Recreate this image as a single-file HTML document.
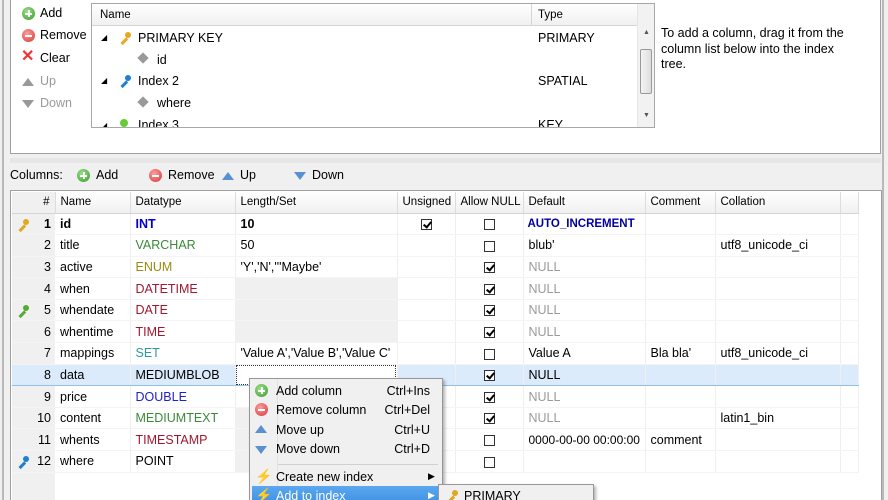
<!DOCTYPE html>
<html style="width:888px;height:500px;overflow:hidden"><head><meta charset="utf-8"><style>
*{box-sizing:border-box;margin:0;padding:0}
body{width:888px;height:500px;overflow:hidden;background:#f0f0f0;font-family:"Liberation Sans",sans-serif;font-size:12px;color:#000;position:relative}
.a{position:absolute}
.ic{position:absolute;width:13px;height:13px;border-radius:50%}
.g{background:radial-gradient(circle at 40% 35%,#9be08a,#3a9a2a)}
.r{background:radial-gradient(circle at 40% 35%,#f8a0a0,#d33)}
.ic:after{content:"";position:absolute;left:3px;top:5.5px;width:7px;height:2px;background:#fff}
.g:before{content:"";position:absolute;left:5.5px;top:3px;width:2px;height:7px;background:#fff}
.up{width:0;height:0;border-left:6px solid transparent;border-right:6px solid transparent;border-bottom:8px solid #5a8fd0;position:absolute}
.dn{width:0;height:0;border-left:6px solid transparent;border-right:6px solid transparent;border-top:8px solid #5a8fd0;position:absolute}
table{border-collapse:collapse;position:absolute;left:12px;top:192px;table-layout:fixed;width:846px;background:#fff}
td,th{height:21.6px;border-right:1px solid #efefef;border-bottom:1px solid #f4f4f4;padding:0 5px;white-space:nowrap;overflow:hidden;font-weight:normal;text-align:left;font-size:12.5px}
th{height:21px;background:linear-gradient(#fff,#f0f0f0);border-right:1px solid #dcdcdc;border-bottom:1px solid #d5d5d5;font-size:11.5px}
td.n{background:#f0f0f0;text-align:right;padding-right:4px;border-right:none}
.gr{background:#f0f0f0}
.cb{display:inline-block;width:11px;height:11px;border:1px solid #333;background:#fff;position:relative;vertical-align:middle}
.ck:after{content:"";position:absolute;left:3px;top:0px;width:3px;height:6px;border:solid #000;border-width:0 2px 2px 0;transform:rotate(40deg)}
.c{text-align:center}
.nl{color:#9a9a9a}
.sel td{background:#dcebfc;border-top:1px solid #8fc1ee;border-bottom:1px solid #8fc1ee}
.mi{position:absolute;left:26px;font-size:12.5px}
.sc{position:absolute;right:12px;font-size:12.5px}
.key{position:relative;display:inline-block;width:12px;height:12px}
.key:before{content:"";position:absolute;right:0;top:0;width:6px;height:6px;border-radius:50%;background:currentColor}
.key:after{content:"";position:absolute;left:0;top:5px;width:8px;height:2.5px;background:currentColor;transform:rotate(-45deg);transform-origin:right center}
</style></head><body>
<div class="a" style="left:2px;top:0;width:2px;height:500px;background:#b9b9b9"></div>
<div class="a" style="left:882px;top:0;width:2px;height:500px;background:#b9b9b9"></div>
<div class="a" style="left:10px;top:-2px;width:871px;height:156px;border:1px solid #a0a0a0;background:#fff"></div>
<div class="ic g" style="left:22px;top:7px"></div><div class="a" style="left:40px;top:6px;font-size:12.5px">Add</div>
<div class="ic r" style="left:22px;top:29px"></div><div class="a" style="left:40px;top:28px;font-size:12.5px">Remove</div>
<div class="a" style="left:21px;top:49px;color:#e33;font-size:16px;font-weight:bold;line-height:16px">✕</div><div class="a" style="left:40px;top:51px;font-size:12.5px">Clear</div>
<div class="up" style="left:22px;top:78px;border-bottom-color:#999"></div><div class="a" style="left:40px;top:74px;color:#999;font-size:12.5px">Up</div>
<div class="dn" style="left:22px;top:100px;border-top-color:#999"></div><div class="a" style="left:40px;top:96px;color:#999;font-size:12.5px">Down</div>
<div class="a" style="left:91px;top:3px;width:564px;height:125px;border:1px solid #a8a8a8;background:#fff;overflow:hidden">
 <div class="a" style="left:0;top:0;width:545px;height:22px;background:linear-gradient(#fff,#f0f0f0);border-bottom:1px solid #d5d5d5"></div>
 <div class="a" style="left:439px;top:0;width:1px;height:22px;background:#d5d5d5"></div>
 <div class="a" style="left:8px;top:5px;font-size:11.5px">Name</div>
 <div class="a" style="left:446px;top:5px;font-size:11.5px">Type</div>
 <div class="a" style="left:9px;top:29px;font-size:8px">◢</div>
 <div class="a" style="left:27px;top:28px;color:#e8a820"><span class="key"></span></div>
 <div class="a" style="left:46px;top:27px;font-size:12.5px">PRIMARY KEY</div>
 <div class="a" style="left:446px;top:27px;font-size:12.5px">PRIMARY</div>
 <div class="a" style="left:47px;top:50px;width:8px;height:8px;background:#999;transform:rotate(45deg)"></div>
 <div class="a" style="left:65px;top:49px;font-size:12.5px">id</div>
 <div class="a" style="left:9px;top:72px;font-size:8px">◢</div>
 <div class="a" style="left:27px;top:71px;color:#1e7fd8"><span class="key"></span></div>
 <div class="a" style="left:46px;top:70px;font-size:12.5px">Index 2</div>
 <div class="a" style="left:446px;top:70px;font-size:12.5px">SPATIAL</div>
 <div class="a" style="left:47px;top:94px;width:8px;height:8px;background:#999;transform:rotate(45deg)"></div>
 <div class="a" style="left:65px;top:92px;font-size:12.5px">where</div>
 <div class="a" style="left:9px;top:117px;font-size:8px">◢</div>
 <div class="a" style="left:28px;top:115px;width:8px;height:8px;border-radius:50%;background:#6c3"></div>
 <div class="a" style="left:46px;top:114px;font-size:12.5px">Index 3</div>
 <div class="a" style="left:446px;top:114px;font-size:12.5px">KEY</div>
 <div class="a" style="left:545px;top:0;width:18px;height:123px;background:#f2f2f2;border-left:1px solid #e5e5e5"></div>
 <div class="a" style="left:548px;top:45px;width:12px;height:45px;border:1px solid #999;border-radius:2px;background:linear-gradient(90deg,#f4f4f4,#ddd)"></div>
 <div class="a" style="left:551px;top:25px;font-size:7px;color:#555">▲</div>
 <div class="a" style="left:551px;top:108px;font-size:7px;color:#555">▼</div>
</div>
<div class="a" style="left:661px;top:26px;width:200px;font-size:12.5px;line-height:15.5px">To add a column, drag it from the column list below into the index tree.</div>
<div class="a" style="left:10px;top:158px;width:871px;height:5px;background:#e6e6e6"></div>
<div class="a" style="left:10px;top:168px;font-size:12.5px">Columns:</div>
<div class="ic g" style="left:77px;top:169px"></div><div class="a" style="left:96px;top:168px;font-size:12.5px">Add</div>
<div class="ic r" style="left:149px;top:169px"></div><div class="a" style="left:168px;top:168px;font-size:12.5px">Remove</div>
<div class="up" style="left:222px;top:172px"></div><div class="a" style="left:240px;top:168px;font-size:12.5px">Up</div>
<div class="dn" style="left:294px;top:172px"></div><div class="a" style="left:312px;top:168px;font-size:12.5px">Down</div>
<div class="a" style="left:10px;top:190px;width:872px;height:312px;border:1px solid #a0a0a0;background:#fff"></div>
<table>
<colgroup><col style="width:43px"><col style="width:75px"><col style="width:105px"><col style="width:162px"><col style="width:58px"><col style="width:68px"><col style="width:122px"><col style="width:70px"><col style="width:125px"><col style="width:18px"></colgroup>
<tr><th style="text-align:right;background:#f0f0f0">#</th><th>Name</th><th>Datatype</th><th>Length/Set</th><th>Unsigned</th><th>Allow NULL</th><th>Default</th><th>Comment</th><th>Collation</th><th></th></tr>
<tr><td class="n"><span style="color:#e0a820;float:left;margin-top:2px" class="key"></span><b>1</b></td><td><b>id</b></td><td style="color:#0000d0"><b>INT</b></td><td><b>10</b></td><td class="c"><span class="cb ck"></span></td><td class="c"><span class="cb"></span></td><td style="color:#0000a0;font-size:11.5px;padding-left:4px"><b>AUTO_INCREMENT</b></td><td></td><td></td><td></td></tr>
<tr><td class="n">2</td><td>title</td><td style="color:#3a8a3a">VARCHAR</td><td>50</td><td></td><td class="c"><span class="cb"></span></td><td>blub'</td><td></td><td>utf8_unicode_ci</td><td></td></tr>
<tr><td class="n">3</td><td>active</td><td style="color:#9a8a10">ENUM</td><td>'Y','N','''Maybe'</td><td></td><td class="c"><span class="cb ck"></span></td><td class="nl">NULL</td><td></td><td></td><td></td></tr>
<tr><td class="n">4</td><td>when</td><td style="color:#a01830">DATETIME</td><td class="gr"></td><td></td><td class="c"><span class="cb ck"></span></td><td class="nl">NULL</td><td></td><td></td><td></td></tr>
<tr><td class="n"><span style="color:#5a3;float:left;margin-top:2px" class="key"></span>5</td><td>whendate</td><td style="color:#a01830">DATE</td><td class="gr"></td><td></td><td class="c"><span class="cb ck"></span></td><td class="nl">NULL</td><td></td><td></td><td></td></tr>
<tr><td class="n">6</td><td>whentime</td><td style="color:#a01830">TIME</td><td class="gr"></td><td></td><td class="c"><span class="cb ck"></span></td><td class="nl">NULL</td><td></td><td></td><td></td></tr>
<tr><td class="n">7</td><td>mappings</td><td style="color:#2a9a9a">SET</td><td>'Value A','Value B','Value C'</td><td></td><td class="c"><span class="cb"></span></td><td>Value A</td><td>Bla bla'</td><td>utf8_unicode_ci</td><td></td></tr>
<tr class="sel"><td class="n" style="background:#dcebfc">8</td><td>data</td><td>MEDIUMBLOB</td><td style="background:#fff;outline:1px dotted #333;outline-offset:-2px"></td><td></td><td class="c"><span class="cb ck"></span></td><td>NULL</td><td></td><td></td><td></td></tr>
<tr><td class="n">9</td><td>price</td><td style="color:#2020d0">DOUBLE</td><td></td><td></td><td class="c"><span class="cb ck"></span></td><td class="nl">NULL</td><td></td><td></td><td></td></tr>
<tr><td class="n">10</td><td>content</td><td style="color:#3a8a3a">MEDIUMTEXT</td><td class="gr"></td><td></td><td class="c"><span class="cb ck"></span></td><td class="nl">NULL</td><td></td><td>latin1_bin</td><td></td></tr>
<tr><td class="n">11</td><td>whents</td><td style="color:#a01830">TIMESTAMP</td><td class="gr"></td><td></td><td class="c"><span class="cb"></span></td><td style="font-size:12px">0000-00-00 00:00:00</td><td>comment</td><td></td><td></td></tr>
<tr><td class="n"><span style="color:#1e7fd8;float:left;margin-top:2px" class="key"></span>12</td><td>where</td><td>POINT</td><td class="gr"></td><td></td><td class="c"><span class="cb"></span></td><td></td><td></td><td></td><td></td></tr>
<tr><td class="n" style="height:40px"></td><td colspan="9" style="border:none"></td></tr>
</table>
<div class="a" style="left:249px;top:378px;width:194px;height:130px;background:#f0f0f0;border:1px solid #979797;box-shadow:2px 2px 3px rgba(0,0,0,.3)">
 <div class="a" style="left:27px;top:0;width:1px;height:130px;background:#e2e2e2"></div>
 <div class="ic g" style="left:5px;top:5px"></div><div class="mi" style="top:5px">Add column</div><div class="sc" style="top:5px">Ctrl+Ins</div>
 <div class="ic r" style="left:5px;top:24px"></div><div class="mi" style="top:24px">Remove column</div><div class="sc" style="top:24px">Ctrl+Del</div>
 <div class="up" style="left:5px;top:46px"></div><div class="mi" style="top:44px">Move up</div><div class="sc" style="top:44px">Ctrl+U</div>
 <div class="dn" style="left:5px;top:67px"></div><div class="mi" style="top:63px">Move down</div><div class="sc" style="top:63px">Ctrl+D</div>
 <div class="a" style="left:28px;top:85px;width:160px;height:1px;background:#d0d0d0"></div>
 <div class="a" style="left:5px;top:89px;color:#f0b010;font-size:14px">⚡</div><div class="mi" style="top:91px">Create new index</div><div class="a" style="left:178px;top:92px;font-size:9px">▶</div>
 <div class="a" style="left:2px;top:107px;width:188px;height:22px;background:linear-gradient(#5aa8f0,#3a8ae0)"></div>
 <div class="a" style="left:5px;top:108px;color:#f0b010;font-size:14px">⚡</div><div class="mi" style="top:110px;color:#fff">Add to index</div><div class="a" style="left:178px;top:111px;font-size:9px;color:#fff">▶</div>
</div>
<div class="a" style="left:438px;top:484px;width:156px;height:30px;background:#f0f0f0;border:1px solid #979797;box-shadow:2px 2px 3px rgba(0,0,0,.3)">
 <div class="a" style="left:7px;top:5px;color:#e0a820"><span class="key"></span></div>
 <div class="a" style="left:25px;top:4px;font-size:12.5px">PRIMARY</div>
</div>
</body></html>
